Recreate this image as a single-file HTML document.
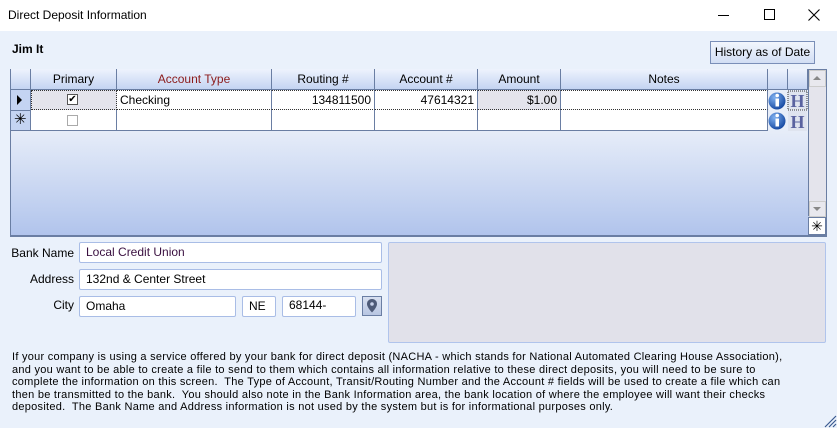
<!DOCTYPE html>
<html><head><style>
*{margin:0;padding:0;box-sizing:border-box}
body{width:837px;height:428px;overflow:hidden;background:#eaf1fb;font-family:"Liberation Sans",sans-serif;font-size:12px;color:#000;position:relative}
.a{position:absolute}
.tb{left:0;top:0;width:837px;height:31px;background:#fff}
.hd{top:69px;height:20px;background:linear-gradient(#eef3fd,#c4d4f2);border-right:1px solid #6a7ea3;text-align:center;line-height:20px;font-size:12px}
.cell{height:21px;border-right:1px solid #6a7ea3;border-bottom:1px solid #6a7ea3;background:#fff;line-height:19px;font-size:12px;padding:0 3px}
.in{background:#fff;border:1px solid #a9bde6;border-radius:2px;height:21px;line-height:19px;padding-left:6px;font-size:12px}
.lb{font-size:12px;text-align:right;width:70px}
</style></head><body>
<div class="a tb"></div>
<div class="a" style="left:8px;top:8px;font-size:12px">Direct Deposit Information</div>
<div class="a" style="left:718px;top:15px;width:11px;height:1px;background:#000"></div>
<div class="a" style="left:764px;top:9px;width:11px;height:11px;border:1px solid #000"></div>
<svg class="a" style="left:808px;top:9px" width="12" height="12"><path d="M0.5 0.5L11.5 11.5M11.5 0.5L0.5 11.5" stroke="#000" stroke-width="1.1"/></svg>
<div class="a" style="left:12px;top:42px;font-weight:bold;font-size:12px">Jim It</div>
<div class="a" style="left:710px;top:41px;width:105px;height:23px;border:1px solid #7a8fb8;background:linear-gradient(#f2f6fd,#d2def4);text-align:center;line-height:21px;font-size:12px">History as of Date</div>
<div class="a" style="left:10px;top:69px;width:817px;height:168px;border:1px solid #6a7ea3;border-width:1px 1px 2px 1px;background:linear-gradient(#e8eef9 35%,#b1c4ec)"></div>
<div class="a hd" style="left:11px;width:20px"></div>
<div class="a hd" style="left:31px;width:86px">Primary</div>
<div class="a hd" style="left:117px;width:155px;color:#8b1a1a">Account Type</div>
<div class="a hd" style="left:272px;width:103px">Routing #</div>
<div class="a hd" style="left:375px;width:103px">Account #</div>
<div class="a hd" style="left:478px;width:83px">Amount</div>
<div class="a hd" style="left:561px;width:207px">Notes</div>
<div class="a hd" style="left:768px;width:20px"></div>
<div class="a hd" style="left:788px;width:20px"></div>
<div class="a" style="left:11px;top:89px;width:797px;height:1px;background:#6a7ea3"></div>
<div class="a" style="left:11px;top:90px;width:20px;height:41px;background:#c4d4f2;border-right:1px solid #6a7ea3"></div>
<div class="a" style="left:11px;top:110px;width:20px;height:1px;background:#6a7ea3"></div>
<div class="a" style="left:11px;top:130px;width:20px;height:1px;background:#6a7ea3"></div>
<div class="a" style="left:17px;top:95px;width:0;height:0;border-left:5px solid #000;border-top:5px solid transparent;border-bottom:5px solid transparent"></div>
<div class="a" style="left:14px;top:112px;font-size:15px;line-height:16px">✳</div>
<div class="a cell" style="left:31px;top:90px;width:86px;height:20px;background:#e4e4ec;border:1px dotted #333"></div>
<div class="a" style="left:67px;top:94px;width:11px;height:11px;border:1px solid #555;background:#fff;font-size:10px;line-height:9px;text-align:center">✔</div>
<div class="a cell" style="left:117px;top:90px;width:155px;height:20px;border-top:1px dotted #333;border-bottom:1px dotted #333">Checking</div>
<div class="a cell" style="left:272px;top:90px;width:103px;height:20px;text-align:right;border-top:1px dotted #333;border-bottom:1px dotted #333">134811500</div>
<div class="a cell" style="left:375px;top:90px;width:103px;height:20px;text-align:right;border-top:1px dotted #333;border-bottom:1px dotted #333">47614321</div>
<div class="a cell" style="left:478px;top:90px;width:83px;height:20px;text-align:right;background:#e4e4ec;border-top:1px dotted #333;border-bottom:1px dotted #333">$1.00</div>
<div class="a cell" style="left:561px;top:90px;width:207px;height:20px;border-top:1px dotted #333;border-bottom:1px dotted #333"></div>
<div class="a cell" style="left:31px;top:110px;width:86px"></div>
<div class="a" style="left:67px;top:115px;width:11px;height:11px;border:1px solid #aaa;background:#fff"></div>
<div class="a cell" style="left:117px;top:110px;width:155px"></div>
<div class="a cell" style="left:272px;top:110px;width:103px"></div>
<div class="a cell" style="left:375px;top:110px;width:103px"></div>
<div class="a cell" style="left:478px;top:110px;width:83px"></div>
<div class="a cell" style="left:561px;top:110px;width:207px"></div>
<svg class="a" style="left:768px;top:90px" width="40" height="42">
<defs><radialGradient id="g" cx="0.35" cy="0.3" r="0.8"><stop offset="0" stop-color="#7fb0f0"/><stop offset="1" stop-color="#0c3f9a"/></radialGradient></defs>
<g><circle cx="9" cy="11" r="8.5" fill="url(#g)"/><rect x="7.5" y="8.5" width="3.5" height="8" fill="#fff"/><circle cx="9.2" cy="5.5" r="1.8" fill="#fff"/>
<rect x="20" y="1" width="19" height="19" fill="#dfe4ef" stroke="#333" stroke-dasharray="1 1"/><text x="29.5" y="17" text-anchor="middle" font-family="Liberation Serif,serif" font-weight="bold" font-size="18" fill="#5a63a0">H</text></g>
<g transform="translate(0,21)"><circle cx="9" cy="10" r="8.5" fill="url(#g)"/><rect x="7.5" y="7.5" width="3.5" height="8" fill="#fff"/><circle cx="9.2" cy="4.5" r="1.8" fill="#fff"/>
<rect x="20" y="0" width="19" height="20" fill="#dfe4ef"/><text x="29.5" y="17" text-anchor="middle" font-family="Liberation Serif,serif" font-weight="bold" font-size="18" fill="#5a63a0">H</text></g>
</svg>
<div class="a" style="left:808px;top:70px;width:18px;height:146px;background:#e4e4ec;border-left:1px solid #6a7ea3"></div>
<div class="a" style="left:809px;top:70px;width:17px;height:17px;background:#e8e8ee;border:1px solid #ccc"></div>
<div class="a" style="left:813px;top:76px;border-bottom:4px solid #888;border-left:4px solid transparent;border-right:4px solid transparent"></div>
<div class="a" style="left:809px;top:201px;width:17px;height:16px;background:#e8e8ee;border:1px solid #ccc"></div>
<div class="a" style="left:813px;top:207px;border-top:4px solid #888;border-left:4px solid transparent;border-right:4px solid transparent"></div>
<div class="a" style="left:808px;top:217px;width:18px;height:18px;background:#fff;border:1px solid #6a7ea3;text-align:center;font-size:14px;line-height:16px">✳</div>
<div class="a lb" style="left:4px;top:246px">Bank Name</div>
<div class="a lb" style="left:4px;top:272px">Address</div>
<div class="a lb" style="left:4px;top:298px">City</div>
<div class="a in" style="left:79px;top:242px;width:303px;color:#3a1040">Local Credit Union</div>
<div class="a in" style="left:79px;top:269px;width:303px">132nd &amp; Center Street</div>
<div class="a in" style="left:79px;top:296px;width:157px">Omaha</div>
<div class="a in" style="left:242px;top:296px;width:34px">NE</div>
<div class="a in" style="left:282px;top:296px;width:74px;line-height:16px">68144-</div>
<div class="a" style="left:362px;top:296px;width:20px;height:20px;background:linear-gradient(#d8e0f0,#b8c6e2);border:1px solid #6a7ea3"></div>
<svg class="a" style="left:366px;top:298px" width="12" height="16"><path d="M6 1C3 1 1 3.2 1 6c0 3.5 5 8.5 5 8.5s5-5 5-8.5C11 3.2 9 1 6 1z" fill="#4e5b78"/><circle cx="6" cy="6" r="1.8" fill="#c8d2ea"/></svg>
<div class="a" style="left:388px;top:242px;width:438px;height:101px;background:#e1e1ea;border:1px solid #b0c4ec;border-radius:2px"></div>
<div class="a" style="left:12px;top:351px;font-size:11px;line-height:12.6px;letter-spacing:0.27px;white-space:pre">If your company is using a service offered by your bank for direct deposit (NACHA - which stands for National Automated Clearing House Association),
and you want to be able to create a file to send to them which contains all information relative to these direct deposits, you will need to be sure to
complete the information on this screen.  The Type of Account, Transit/Routing Number and the Account # fields will be used to create a file which can
then be transmitted to the bank.  You should also note in the Bank Information area, the bank location of where the employee will want their checks
deposited.  The Bank Name and Address information is not used by the system but is for informational purposes only.</div>
<svg class="a" style="left:824px;top:414px" width="13" height="14"><path d="M1 13L12 2M5 13L12 6M9 13L12 10" stroke="#3a5a90" stroke-width="1.2"/></svg>
</body></html>
